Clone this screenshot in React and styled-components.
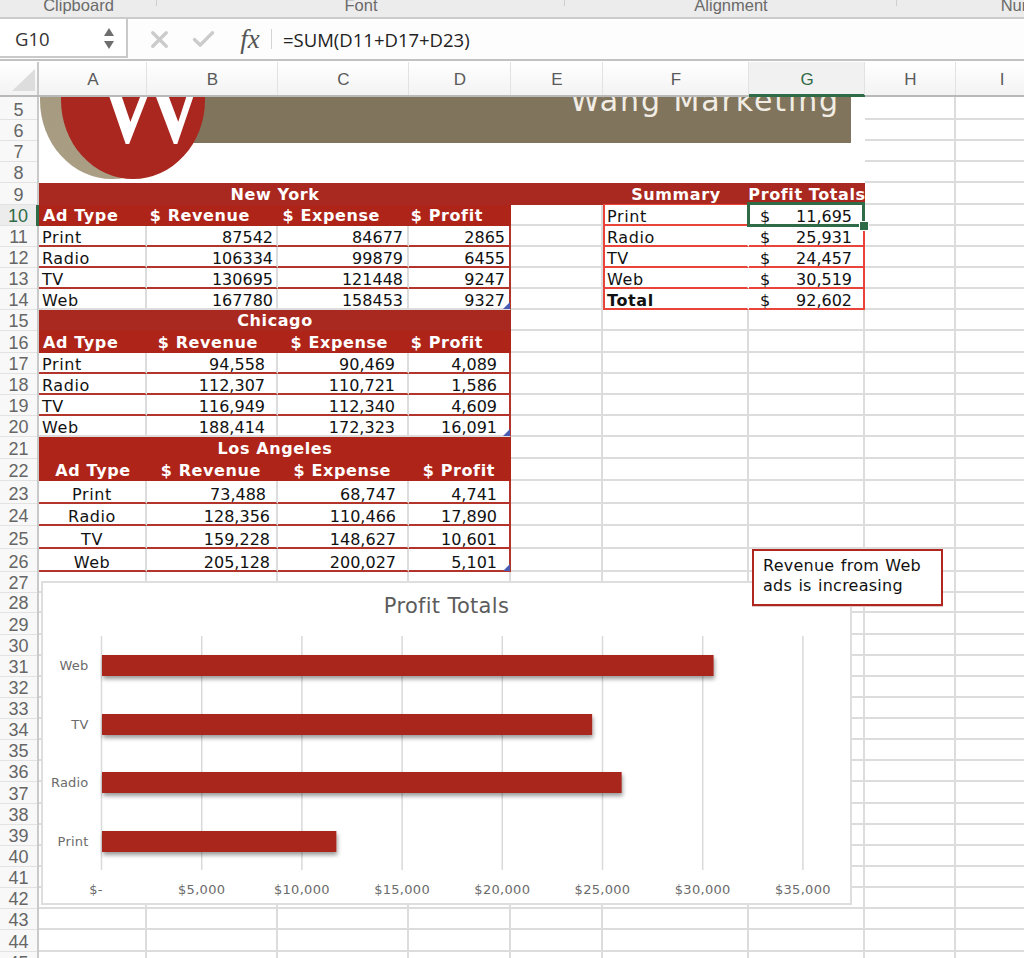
import React from 'react'
import styled, { createGlobalStyle } from 'styled-components'
import { X, Check } from 'lucide-react'

const COLUMNS = '39px 108px 131px 131px 102px 92px 146px 116px 91px 92px'
const GRID = '#dcdcdc'
const GREEN = '#2f6b47'
const SHEET_FONT = '"DejaVu Sans", Verdana, sans-serif'
const UI_FONT = '"Liberation Sans", Arial, sans-serif'

const GlobalStyle = createGlobalStyle`
  html, body {
    margin: 0;
    height: 958px;
    overflow: hidden;
    background: #fff;
  }
`

const Page = styled.div`
  width: 1024px;
  height: 958px;
  overflow: hidden;
  display: flex;
  flex-direction: column;
  font-family: ${UI_FONT};
`

/* ribbon bottom edge, cropped group labels */
const Ribbon = styled.div`
  display: grid;
  grid-template-columns: 157px 408px 332px 266px;
  height: 19px;
  flex: none;
  background: #ececec;
  border-bottom: 2px solid #cbcbcb;
  box-sizing: border-box;
  overflow: hidden;
`

const RibbonGroup = styled.div`
  position: relative;
  text-align: center;
  font-size: 16.5px;
  line-height: 10px;
  color: #6a6a6a;
  white-space: nowrap;

  &::after {
    content: '';
    position: absolute;
    right: 0;
    top: 0;
    height: 6px;
    width: 1px;
    background: #cfcfcf;
  }
`

const FormulaBar = styled.div`
  display: flex;
  height: 42px;
  flex: none;
  background: #fdfdfd;
  border-bottom: 2px solid #c2c2c2;
  box-sizing: border-box;
`

const NameBox = styled.div`
  width: 128px;
  height: 39px;
  box-sizing: border-box;
  display: flex;
  align-items: center;
  justify-content: space-between;
  padding: 1px 12px 0 15px;
  background: #fff;
  border-right: 2px solid #c9c9c9;
  border-bottom: 2px solid #c9c9c9;
  font-family: "Open Sans", sans-serif;
  font-size: 18.5px;
  color: #333;
`

const Stepper = styled.div`
  display: flex;
  flex-direction: column;
  gap: 5px;
`

const Arrow = styled.span`
  width: 0;
  height: 0;
  border-left: 5px solid transparent;
  border-right: 5px solid transparent;
  ${(p) => (p.$down ? 'border-top: 8px solid #6e6e6e;' : 'border-bottom: 8px solid #6e6e6e;')}
`

const FormulaTools = styled.div`
  flex: 1;
  display: flex;
  align-items: center;
  padding-left: 20px;
`

const ToolIcon = styled.span`
  width: 22px;
  display: flex;
  justify-content: center;
  color: #cbcbcb;
  margin-right: 22px;

  svg {
    flex: none;
  }
`

const Fx = styled.span`
  font-family: "Liberation Serif", serif;
  font-style: italic;
  font-size: 27px;
  color: #555;
  margin-left: -1px;
  width: 30px;
  text-align: center;
`

const Divider = styled.span`
  width: 1px;
  height: 20px;
  background: #d4d4d4;
  margin: 0 11px 0 6px;
`

const Formula = styled.span`
  font-family: "Open Sans", sans-serif;
  font-size: 18.5px;
  color: #222;
`

const ColumnHeader = styled.div`
  display: grid;
  grid-template-columns: ${COLUMNS};
  height: 35px;
  margin-top: 1px;
  flex: none;
  box-sizing: border-box;
  border-bottom: 2px solid #b9b9b9;
  background: linear-gradient(#ffffff, #f3f3f3);
`

const Corner = styled.div`
  position: relative;
  border-right: 2px solid #c9c9c9;

  &::after {
    content: '';
    position: absolute;
    left: 12px;
    top: 7px;
    width: 23px;
    height: 22px;
    background: #dddddd;
    clip-path: polygon(100% 0, 100% 100%, 0 100%);
  }
`

const ColumnName = styled.div`
  display: flex;
  align-items: center;
  justify-content: center;
  padding: 3px 0 0 1px;
  font-size: 17px;
  color: ${(p) => (p.$active ? GREEN : '#5a5a5a')};
  border-right: 1px solid #e2e2e2;
  ${(p) => p.$active && `
    background: #f1f1f1;
    box-shadow: 0 2px 0 ${GREEN}, inset 0 -1px 0 ${GREEN};
  `}
`

const Sheet = styled.div`
  position: relative;
  flex: 1;
  overflow: hidden;
`

const Row = styled.div`
  display: grid;
  grid-template-columns: ${COLUMNS};
  grid-template-rows: 100%;
  height: ${(p) => p.$h}px;
  font-family: ${SHEET_FONT};
  font-size: 16px;
  color: #111;
`

const RowHead = styled.div`
  display: flex;
  align-items: flex-end;
  justify-content: center;
  box-sizing: border-box;
  font-family: ${UI_FONT};
  font-size: 18px;
  line-height: 20px;
  color: ${(p) => (p.$active ? GREEN : '#666')};
  background: ${(p) => (p.$active ? '#ececec' : '#f8f8f8')};
  box-shadow: inset 0 -1px 0 #e2e2e2;
  border-right: ${(p) => (p.$active ? `3px solid ${GREEN}` : '2px solid #c9c9c9')};
`

const Cell = styled.div`
  position: relative;
  display: flex;
  align-items: flex-end;
  justify-content: ${(p) => p.$justify || 'flex-start'};
  box-sizing: border-box;
  white-space: nowrap;
  line-height: 14px;
  letter-spacing: ${(p) => (p.$label ? '0.6px' : 'normal')};
  padding: ${(p) => `0 ${p.$padRight ?? 0}px 0 ${p.$padLeft ?? 0}px`};
  background: #fff;
  border-right: 2px solid ${(p) => p.$rightColor || GRID};
  border-bottom: 2px solid ${(p) => p.$bottomColor || GRID};
`

const BannerSpace = styled.div`
  grid-column: span 7;
  background: #fff;
`

const RedCell = styled.div`
  display: flex;
  align-items: flex-end;
  justify-content: ${(p) => p.$justify || 'flex-end'};
  white-space: nowrap;
  overflow: visible;
  line-height: 20px;
  letter-spacing: 0.6px;
  padding: ${(p) => `0 ${p.$padRight ?? 0}px 0 ${p.$padLeft ?? 0}px`};
  background: ${(p) => (p.$dark ? '#a9281f' : '#af2418')};
  color: #fff;
  font-weight: 700;
  ${(p) => p.$span && `grid-column: span ${p.$span};`}
`

const SummaryCell = styled(Cell)`
  background: #fff;
  border-bottom-color: #e9443a;
  border-right-color: ${(p) => (p.$last ? '#e9443a' : 'transparent')};
  ${(p) => !p.$last && 'border-left: 2px solid #e9443a;'}
  ${(p) => p.$first && 'box-shadow: 0 -1px 0 #e9443a;'}
  font-weight: ${(p) => (p.$bold ? 700 : 400)};
`

const Marker = styled.span`
  position: absolute;
  right: -1px;
  bottom: -1px;
  width: 7px;
  height: 7px;
  background: #4a5cb4;
  clip-path: polygon(100% 0, 100% 100%, 0 100%);
`

const Selection = styled.span`
  position: absolute;
  z-index: 2;
  left: -2px;
  top: -3px;
  width: 118px;
  height: 25px;
  box-sizing: border-box;
  border: 3px solid ${GREEN};
  pointer-events: none;
`

const Handle = styled.span`
  position: absolute;
  right: -7px;
  bottom: -7px;
  width: 10px;
  height: 10px;
  box-sizing: border-box;
  background: ${GREEN};
  border: 1px solid #fff;
`

/* picture overlay at the top of the sheet, scrolled off at row 5 */
const Banner = styled.div`
  position: absolute;
  left: 39px;
  top: 0;
  width: 812px;
  height: 86px;
  overflow: hidden;
`

const BannerBand = styled.div`
  height: 46px;
  margin-left: 60px;
  background: #80745c;
  display: flex;
  justify-content: flex-end;
  padding-right: 11px;
  overflow: hidden;
`

const BannerTitle = styled.div`
  font-family: ${SHEET_FONT};
  font-size: 30px;
  line-height: 30px;
  letter-spacing: 1.9px;
  color: #f1ede4;
  margin-top: -11px;
  white-space: nowrap;
`

const Logo = styled.svg`
  position: absolute;
  left: 0;
  top: 0;
`

const ChartBox = styled.div`
  position: absolute;
  left: 41px;
  top: 484px;
  width: 811px;
  height: 324px;
  box-sizing: border-box;
  background: #fff;
  border: 2px solid #dedede;
  display: flex;
  flex-direction: column;
`

const ChartTitle = styled.div`
  height: 46px;
  flex: none;
  display: flex;
  align-items: center;
  justify-content: center;
  font-family: ${SHEET_FONT};
  font-size: 21px;
  letter-spacing: 0.3px;
  color: #5c5c5c;
`

const TextBox = styled.div`
  position: absolute;
  left: 752px;
  top: 452px;
  width: 191px;
  height: 57px;
  box-sizing: border-box;
  padding: 5px 9px;
  background: #fff;
  border: 2px solid #b0271f;
  box-shadow: 0 1px 0 #e3c9c6;
  font-family: ${SHEET_FONT};
  font-size: 16px;
  line-height: 20px;
  letter-spacing: 0.25px;
  word-spacing: 1px;
  color: #111;
`

const HEIGHTS = [23, 21, 21, 21, 22, 21, 21, 21, 21, 21, 21, 22, 21, 21, 21, 21, 22, 22, 23, 22, 23, 23, 21, 20, 22, 21, 21, 21, 21, 21, 21, 21, 22, 21, 21, 21, 21, 21, 21, 22, 21]

const TABLES = [
  {
    start: 9,
    title: 'New York',
    dark: true,
    headPad: [28, 29, 28],
    pads: [3, 4, 4],
    closed: false,
    rows: [
      ['Print', '87542', '84677', '2865'],
      ['Radio', '106334', '99879', '6455'],
      ['TV', '130695', '121448', '9247'],
      ['Web', '167780', '158453', '9327']
    ]
  },
  {
    start: 15,
    title: 'Chicago',
    dark: true,
    headPad: [20, 21, 28],
    pads: [11, 12, 12],
    closed: false,
    rows: [
      ['Print', '94,558', '90,469', '4,089'],
      ['Radio', '112,307', '110,721', '1,586'],
      ['TV', '116,949', '112,340', '4,609'],
      ['Web', '188,414', '172,323', '16,091']
    ]
  },
  {
    start: 21,
    title: 'Los Angeles',
    centered: true,
    headPad: [17, 18, 16],
    pads: [6, 11, 12],
    closed: true,
    rows: [
      ['Print', '73,488', '68,747', '4,741'],
      ['Radio', '128,356', '110,466', '17,890'],
      ['TV', '159,228', '148,627', '10,601'],
      ['Web', '205,128', '200,027', '5,101']
    ]
  }
]

const HEADS = ['$ Revenue', '$ Expense', '$ Profit']

const SUMMARY = [
  ['Print', '11,695'],
  ['Radio', '25,931'],
  ['TV', '24,457'],
  ['Web', '30,519'],
  ['Total', '92,602']
]

const TABLE_RED = '#b3342b'

const TableCells = ({ n }) => {
  const table = TABLES.find((t) => n >= t.start && n < t.start + 6)
  if (!table) return [0, 1, 2, 3].map((i) => <Cell key={i} />)

  const offset = n - table.start
  if (offset === 0) {
    return <RedCell $span={4} $justify="center" $dark={table.dark}>{table.title}</RedCell>
  }
  if (offset === 1) {
    return (
      <>
        <RedCell
          $justify={table.centered ? 'center' : 'flex-start'}
          $padLeft={table.centered ? 0 : 4}
        >
          Ad Type
        </RedCell>
        {HEADS.map((h, i) => (
          <RedCell key={h} $padRight={table.headPad[i]}>{h}</RedCell>
        ))}
      </>
    )
  }

  const index = offset - 2
  const row = table.rows[index]
  const lined = index < 3 || table.closed
  const bottom = lined ? TABLE_RED : GRID
  return (
    <>
      <Cell
        $label
        $bottomColor={bottom}
        $justify={table.centered ? 'center' : 'flex-start'}
        $padLeft={table.centered ? 0 : 3}
      >
        {row[0]}
      </Cell>
      {[1, 2, 3].map((c) => (
        <Cell
          key={c}
          $justify="flex-end"
          $padRight={table.pads[c - 1] + (table.centered && c === 1 && index === 0 ? 4 : 0)}
          $bottomColor={bottom}
          $rightColor={c === 3 ? TABLE_RED : GRID}
        >
          {row[c]}
          {c === 3 && index === 3 && <Marker />}
        </Cell>
      ))}
    </>
  )
}

const RightCells = ({ n }) => {
  if (n === 9) {
    return (
      <>
        <RedCell $dark />
        <RedCell $dark $justify="center">Summary</RedCell>
        <RedCell $dark $justify="center">Profit Totals</RedCell>
      </>
    )
  }
  const index = n - 10
  if (index >= 0 && index < SUMMARY.length) {
    const [label, value] = SUMMARY[index]
    return (
      <>
        <Cell />
        <SummaryCell $label $padLeft={2} $first={index === 0} $bold={label === 'Total'}>{label}</SummaryCell>
        <SummaryCell $last $justify="space-between" $padLeft={11} $padRight={11} $first={index === 0}>
          <span>$</span>
          <span>{value}</span>
          {index === 0 && <Selection><Handle /></Selection>}
        </SummaryCell>
      </>
    )
  }
  return [0, 1, 2].map((i) => <Cell key={i} />)
}

const SheetRow = ({ n, h }) => (
  <Row $h={h}>
    <RowHead $active={n === 10}>{n}</RowHead>
    {n < 9 ? <BannerSpace /> : (
      <>
        <TableCells n={n} />
        <RightCells n={n} />
      </>
    )}
    <Cell />
    <Cell />
  </Row>
)

const BARS = [
  { label: 'Web', value: 30519, y: 655 },
  { label: 'TV', value: 24457, y: 714 },
  { label: 'Radio', value: 25931, y: 772 },
  { label: 'Print', value: 11695, y: 831 }
]

const TICKS = ['$-', '$5,000', '$10,000', '$15,000', '$20,000', '$25,000', '$30,000', '$35,000']
const tickX = (i) => 101.5 + i * 100.2

// viewBox is in page coordinates so the numbers read off the screenshot directly
const BarChart = () => (
  <svg width="807" height="274" viewBox="43 629 807 274" fontFamily={SHEET_FONT} fontSize="13" fill="#6b6b6b">
    <defs>
      <filter id="barShadow" x="-5%" y="-30%" width="110%" height="190%">
        <feDropShadow dx="1" dy="3" stdDeviation="2" floodColor="#000" floodOpacity="0.4" />
      </filter>
    </defs>
    {TICKS.map((t, i) => (
      <g key={t}>
        <line x1={tickX(i)} x2={tickX(i)} y1="636" y2="870" stroke="#d9d9d9" strokeWidth="1.5" />
        <text x={i === 0 ? 96 : tickX(i)} y="894" textAnchor="middle" letterSpacing="0.3">{t}</text>
      </g>
    ))}
    {BARS.map((b) => (
      <g key={b.label}>
        <text x="88.5" y={b.y + 15} textAnchor="end" letterSpacing="0.2">{b.label}</text>
        <rect x="102" y={b.y} width={(b.value * 100.2) / 5000} height="21" fill="#a9271f" filter="url(#barShadow)" />
      </g>
    ))}
  </svg>
)

const App = () => (
  <Page>
    <GlobalStyle />
    <Ribbon>
      <RibbonGroup>Clipboard</RibbonGroup>
      <RibbonGroup>Font</RibbonGroup>
      <RibbonGroup>Alignment</RibbonGroup>
      <RibbonGroup>Number</RibbonGroup>
    </Ribbon>

    <FormulaBar>
      <NameBox>
        G10
        <Stepper>
          <Arrow />
          <Arrow $down />
        </Stepper>
      </NameBox>
      <FormulaTools>
        <ToolIcon><X size={27} strokeWidth={3} /></ToolIcon>
        <ToolIcon><Check size={27} strokeWidth={3} /></ToolIcon>
        <Fx>fx</Fx>
        <Divider />
        <Formula>=SUM(D11+D17+D23)</Formula>
      </FormulaTools>
    </FormulaBar>

    <ColumnHeader>
      <Corner />
      {['A', 'B', 'C', 'D', 'E', 'F', 'G', 'H', 'I'].map((c) => (
        <ColumnName key={c} $active={c === 'G'}>{c}</ColumnName>
      ))}
    </ColumnHeader>

    <Sheet>
      {HEIGHTS.map((h, i) => (
        <SheetRow key={i} n={i + 5} h={h} />
      ))}

      <Banner>
        <BannerBand>
          <BannerTitle>Wang Marketing</BannerTitle>
        </BannerBand>
        <Logo width="180" height="86" viewBox="0 0 180 86">
          <defs>
            <linearGradient id="tan" x1="0" y1="0" x2="0" y2="1">
              <stop offset="0" stopColor="#a2967c" />
              <stop offset="1" stopColor="#aa9e85" />
            </linearGradient>
          </defs>
          <ellipse cx="73" cy="3" rx="72" ry="79" fill="url(#tan)" />
          <ellipse cx="94" cy="3" rx="72" ry="79" fill="#a9271f" />
          <text x="51" y="45" fontFamily='"Liberation Serif", serif' fontSize="130" fill="#fff">W</text>
        </Logo>
      </Banner>

      <ChartBox>
        <ChartTitle>Profit Totals</ChartTitle>
        <BarChart />
      </ChartBox>

      <TextBox>Revenue from Web<br />ads is increasing</TextBox>
    </Sheet>
  </Page>
)

export default App
